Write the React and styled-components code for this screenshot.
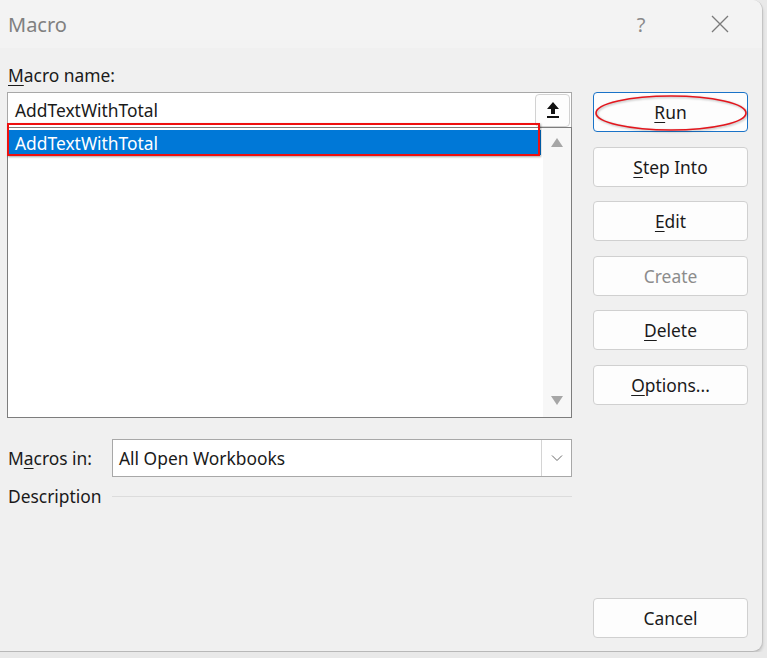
import React from 'react';
import styled, { createGlobalStyle } from 'styled-components';

const GlobalStyle = createGlobalStyle`
  html, body {
    margin: 0;
    padding: 0;
    background: #e9e9e9;
    font-family: "Noto Sans", "Open Sans", sans-serif;
  }
`;

const Window = styled.div`
  width: 762px;
  height: 651px;
  background: #f0f0f0;
  border-right: 1px solid #c4c4c4;
  border-bottom: 1px solid #b8b8b8;
  border-radius: 0 10px 10px 0;
  box-shadow: 0 2px 3px rgba(0, 0, 0, 0.15);
  display: flex;
  flex-direction: column;
  overflow: hidden;
`;

const TitleBar = styled.div`
  height: 48px;
  background: #f3f3f3;
  display: flex;
  align-items: center;
  padding: 0 22px 0 8px;
  flex-shrink: 0;
`;

const Title = styled.div`
  flex: 1;
  font-size: 20px;
  color: #808080;
`;

const TitleButton = styled.div`
  width: 40px;
  display: flex;
  justify-content: center;
  align-items: center;
  color: #8a8a8a;
  font-size: 20px;
  margin-left: ${p => p.$gap || 0}px;
`;

const Body = styled.div`
  flex: 1;
  display: flex;
  gap: 21px;
  padding: 16px 14px 13px 7px;
`;

const LeftColumn = styled.div`
  width: 565px;
  display: flex;
  flex-direction: column;
`;

const Label = styled.div`
  font-size: 17.4px;
  color: #1a1a1a;
  line-height: 22px;
  margin-left: 1px;
  white-space: nowrap;
`;

const U = styled.span`
  text-decoration: underline;
  text-underline-offset: 3px;
`;

const NameField = styled.div`
  margin-top: 6px;
  height: 34px;
  background: #fff;
  border: 1px solid #a8a8a8;
  border-bottom: none;
  display: flex;
  align-items: center;
  padding-left: 7px;
  padding-right: 1px;
  font-size: 17.4px;
  color: #1a1a1a;
`;

const FieldText = styled.div`
  flex: 1;
`;

const UploadButton = styled.div`
  width: 33px;
  height: 31px;
  border: 1px solid #d2d2d2;
  border-radius: 4px;
  background: #fdfdfd;
  display: flex;
  align-items: center;
  justify-content: center;
`;

const ListBox = styled.div`
  position: relative;
  height: 289px;
  background: #fff;
  border: 1px solid #7d7d7d;
  display: flex;
`;

const ListItems = styled.div`
  flex: 1;
  padding: 2px 2px 0 1px;
`;

const ListItem = styled.div`
  height: 25px;
  display: flex;
  align-items: center;
  padding-left: 6px;
  font-size: 17.4px;
  color: ${p => (p.$selected ? '#fff' : '#1a1a1a')};
  background: ${p => (p.$selected ? '#0078d7' : 'transparent')};
`;

const ScrollBar = styled.div`
  width: 28px;
  background: #f7f7f7;
  display: flex;
  flex-direction: column;
  justify-content: space-between;
  align-items: center;
  padding: 10px 0 12px;
`;

const Arrow = styled.div`
  width: 0;
  height: 0;
  border-left: 6px solid transparent;
  border-right: 6px solid transparent;
  ${p => (p.$down ? 'border-top: 9px solid #a6a6a6;' : 'border-bottom: 9px solid #a6a6a6;')}
`;

const HighlightBox = styled.div`
  position: absolute;
  left: -1px;
  top: -5px;
  width: 529px;
  height: 29px;
  border: 2.5px solid #ee1010;
  box-shadow: 1px 1px 2px rgba(0, 0, 0, 0.35);
  pointer-events: none;
`;

const MacrosInRow = styled.div`
  margin-top: 21px;
  display: flex;
  align-items: center;
  gap: 20px;
`;

const Select = styled.div`
  flex: 1;
  height: 36px;
  background: #fff;
  border: 1px solid #a8a8a8;
  display: flex;
  align-items: stretch;
  font-size: 17.4px;
  color: #1a1a1a;
`;

const SelectText = styled.div`
  flex: 1;
  display: flex;
  align-items: center;
  padding-left: 6px;
`;

const Chevron = styled.div`
  width: 29px;
  border-left: 1px solid #d4d4d4;
  display: flex;
  align-items: center;
  justify-content: center;
`;

const DescriptionRow = styled.div`
  margin-top: 8px;
  display: flex;
  align-items: center;
  gap: 10px;
`;

const Rule = styled.div`
  flex: 1;
  height: 1px;
  background: #dcdcdc;
`;

const RightColumn = styled.div`
  width: 155px;
  padding-top: 28px;
  display: flex;
  flex-direction: column;
  gap: 14.6px;
`;

const ButtonWrap = styled.div`
  position: relative;
  ${p => p.$bottom && 'margin-top: auto;'}
`;

const Button = styled.div`
  height: 38px;
  background: #fdfdfd;
  border: 1px solid ${p => (p.$focused ? '#1a73c8' : '#d0d0d0')};
  border-radius: 4px;
  display: flex;
  align-items: center;
  justify-content: center;
  font-size: 17.4px;
  color: ${p => (p.$disabled ? '#8c8c8c' : '#1a1a1a')};
`;

const Ellipse = styled.svg`
  position: absolute;
  left: 1px;
  top: 2px;
  pointer-events: none;
  filter: drop-shadow(1px 1px 1px rgba(0, 0, 0, 0.3));
`;

const UploadIcon = () => (
  <svg width="16" height="18" viewBox="0 0 16 18">
    <path d="M8 1 L14 8 H10 V13 H6 V8 H2 Z" fill="#111" />
    <rect x="2" y="15" width="12" height="2" fill="#111" />
  </svg>
);

const CloseIcon = () => (
  <svg width="20" height="20" viewBox="0 0 20 20">
    <path d="M2 2 L18 18 M18 2 L2 18" stroke="#7a7a7a" strokeWidth="1.3" />
  </svg>
);

const ChevronIcon = () => (
  <svg width="12" height="8" viewBox="0 0 12 8">
    <path d="M1 1.5 L6 6.5 L11 1.5" stroke="#6a6a6a" strokeWidth="1" fill="none" />
  </svg>
);

const buttons = [
  { key: 'step', label: <><U>S</U>tep Into</> },
  { key: 'edit', label: <><U>E</U>dit</> },
  { key: 'create', label: 'Create', disabled: true },
  { key: 'delete', label: <><U>D</U>elete</> },
  { key: 'options', label: <><U>O</U>ptions...</> },
];

export default function App() {
  return (
    <>
      <GlobalStyle />
      <Window>
        <TitleBar>
          <Title>Macro</Title>
          <TitleButton>?</TitleButton>
          <TitleButton $gap={39}><CloseIcon /></TitleButton>
        </TitleBar>
        <Body>
          <LeftColumn>
            <Label><U>M</U>acro name:</Label>
            <NameField>
              <FieldText>AddTextWithTotal</FieldText>
              <UploadButton><UploadIcon /></UploadButton>
            </NameField>
            <ListBox>
              <ListItems>
                <ListItem $selected>AddTextWithTotal</ListItem>
              </ListItems>
              <ScrollBar>
                <Arrow />
                <Arrow $down />
              </ScrollBar>
              <HighlightBox />
            </ListBox>
            <MacrosInRow>
              <Label>M<U>a</U>cros in:</Label>
              <Select>
                <SelectText>All Open Workbooks</SelectText>
                <Chevron><ChevronIcon /></Chevron>
              </Select>
            </MacrosInRow>
            <DescriptionRow>
              <Label>Description</Label>
              <Rule />
            </DescriptionRow>
          </LeftColumn>
          <RightColumn>
            <ButtonWrap>
              <Button $focused><U>R</U>un</Button>
              <Ellipse width="154" height="38" viewBox="0 0 154 38">
                <ellipse cx="77" cy="19" rx="75" ry="17" fill="none" stroke="#e3161d" strokeWidth="1.6" />
              </Ellipse>
            </ButtonWrap>
            {buttons.map(b => (
              <ButtonWrap key={b.key}>
                <Button $disabled={b.disabled}>{b.label}</Button>
              </ButtonWrap>
            ))}
            <ButtonWrap $bottom>
              <Button>Cancel</Button>
            </ButtonWrap>
          </RightColumn>
        </Body>
      </Window>
    </>
  );
}
